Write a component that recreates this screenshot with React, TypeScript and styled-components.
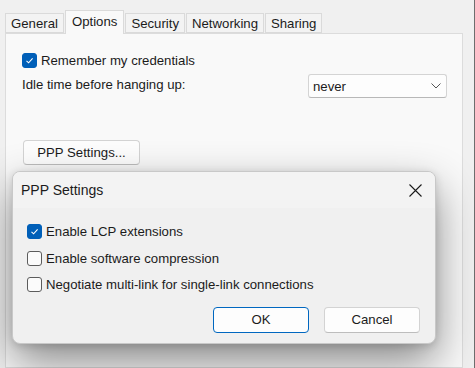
import styled, { createGlobalStyle } from 'styled-components';

const GlobalStyle = createGlobalStyle`
    html, body {
        margin: 0;
        padding: 0;
        background: #f0f0f0;
        overflow: hidden;
    }
    body {
        font-family: "Liberation Sans", Arial, sans-serif;
        font-size: 13.2px;
        color: #1b1b1b;
    }
`;

const Window = styled.div`
    position: relative;
    box-sizing: border-box;
    width: 475px;
    height: 368px;
    padding: 10px 11px 0 5px;
    display: flex;
    flex-direction: column;
    border-right: 1px solid #6e6e6e;
`;

const TabBar = styled.div`
    display: flex;
    align-items: flex-end;
    height: 23px;
    gap: 1px;
`;

const Tab = styled.div<{ active?: boolean }>`
    box-sizing: border-box;
    display: flex;
    align-items: center;
    padding: ${(p) => (p.active ? '0 6px 2px' : '0 5px')};
    height: ${(p) => (p.active ? '24px' : '20px')};
    margin-bottom: ${(p) => (p.active ? '-1px' : '0')};
    background: ${(p) => (p.active ? '#f9f9f9' : '#f3f3f3')};
    border: 1px solid #dadada;
    border-bottom: ${(p) => (p.active ? 'none' : '1px solid #dadada')};
    position: relative;
    z-index: ${(p) => (p.active ? 1 : 0)};
`;

const Panel = styled.div`
    flex: 1;
    background: #f9f9f9;
    border: 1px solid #dcdcdc;
    padding: 18px 15px 0 16px;
`;

const Row = styled.div<{ height?: number }>`
    display: flex;
    align-items: center;
    justify-content: space-between;
    height: ${(p) => p.height ?? 16}px;
`;

const CheckLabel = styled.label`
    display: flex;
    align-items: center;
    gap: 4px;
`;

const Box = styled.span<{ checked?: boolean }>`
    box-sizing: border-box;
    width: 15px;
    height: 15px;
    border-radius: 3px;
    display: inline-flex;
    align-items: center;
    justify-content: center;
    background: ${(p) => (p.checked ? '#005fb8' : '#fbfbfb')};
    border: 1px solid ${(p) => (p.checked ? '#005fb8' : '#5c5c5c')};
`;

const Select = styled.div`
    box-sizing: border-box;
    width: 139px;
    height: 24px;
    display: flex;
    align-items: center;
    justify-content: space-between;
    padding: 0 5px 0 4px;
    background: #fdfdfd;
    border: 1px solid #d4d4d4;
    border-bottom-color: #b8b8b8;
    border-radius: 3px;
    margin-top: 4px;
`;

const Button = styled.button<{ primary?: boolean; width?: number; height?: number }>`
    box-sizing: border-box;
    width: ${(p) => p.width ?? 96}px;
    height: ${(p) => p.height ?? 26}px;
    font: inherit;
    color: #1b1b1b;
    background: #fdfdfd;
    border: 1px solid ${(p) => (p.primary ? '#0067c0' : '#d3d3d3')};
    border-bottom-color: ${(p) => (p.primary ? '#0067c0' : '#bdbdbd')};
    border-radius: 4px;
    padding: 0;
`;

const PppButtonWrap = styled.div`
    margin-top: 40px;
    margin-left: 1px;
`;

const Dialog = styled.div`
    position: absolute;
    left: 12px;
    top: 171px;
    width: 424px;
    height: 173px;
    box-sizing: border-box;
    border: 1px solid #c8c8c8;
    border-radius: 8px;
    background: #f0f0f0;
    box-shadow: 0 18px 44px rgba(0, 0, 0, 0.45), 0 2px 8px rgba(0, 0, 0, 0.14);
    display: flex;
    flex-direction: column;
    overflow: hidden;
`;

const TitleBar = styled.div`
    height: 36px;
    background: #f3f3f3;
    display: flex;
    align-items: center;
    justify-content: space-between;
    padding: 0 13px 0 8px;
    font-size: 14px;
`;

const DialogBody = styled.div`
    flex: 1;
    display: flex;
    flex-direction: column;
    padding: 16px 15px 0 14px;
    gap: 11.5px;
`;

const Buttons = styled.div`
    display: flex;
    justify-content: flex-end;
    gap: 15px;
    margin-top: 3px;
`;

function Check() {
    return (
        <svg width="11" height="11" viewBox="0 0 11 11">
            <path d="M2.5 5.8 L4.6 7.8 L8.6 3.4" fill="none" stroke="#fff" strokeWidth="1.1" />
        </svg>
    );
}

function Checkbox({ checked, label }: { checked?: boolean; label: string }) {
    return (
        <CheckLabel>
            <Box checked={checked}>{checked && <Check />}</Box>
            {label}
        </CheckLabel>
    );
}

export default function App() {
    return (
        <Window>
            <GlobalStyle />
            <TabBar>
                <Tab>General</Tab>
                <Tab active>Options</Tab>
                <Tab>Security</Tab>
                <Tab>Networking</Tab>
                <Tab>Sharing</Tab>
            </TabBar>
            <Panel>
                <Row>
                    <Checkbox checked label="Remember my credentials" />
                </Row>
                <Row height={32}>
                    <span>Idle time before hanging up:</span>
                    <Select>
                        <span>never</span>
                        <svg width="10" height="6" viewBox="0 0 10 6">
                            <path d="M0.5 0.5 L5 5 L9.5 0.5" fill="none" stroke="#555" strokeWidth="1" />
                        </svg>
                    </Select>
                </Row>
                <PppButtonWrap>
                    <Button width={117} height={25}>PPP Settings...</Button>
                </PppButtonWrap>
            </Panel>
            <Dialog>
                <TitleBar>
                    <span>PPP Settings</span>
                    <svg width="13" height="13" viewBox="0 0 13 13">
                        <path d="M0.5 0.5 L12.5 12.5 M12.5 0.5 L0.5 12.5" stroke="#1b1b1b" strokeWidth="1.1" />
                    </svg>
                </TitleBar>
                <DialogBody>
                    <Checkbox checked label="Enable LCP extensions" />
                    <Checkbox label="Enable software compression" />
                    <Checkbox label="Negotiate multi-link for single-link connections" />
                    <Buttons>
                        <Button primary>OK</Button>
                        <Button>Cancel</Button>
                    </Buttons>
                </DialogBody>
            </Dialog>
        </Window>
    );
}
